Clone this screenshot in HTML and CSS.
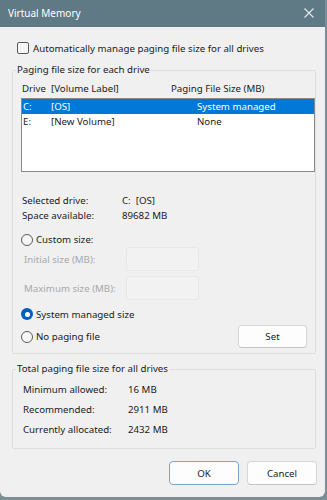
FILE: index.html
```html
<!DOCTYPE html>
<html>
<head>
<meta charset="utf-8">
<link rel="stylesheet" href="styles.css">
</head>
<body>
<div class="window">
  <div class="titlebar">
    <span class="title">Virtual Memory</span>
    <svg class="close" width="10" height="10" viewBox="0 0 10 10"><path d="M0.5 0.5 L9.5 9.5 M9.5 0.5 L0.5 9.5" stroke="#e4eaec" stroke-width="1.1" fill="none"/></svg>
  </div>
  <div class="content">
    <div class="auto-row">
      <span class="checkbox"></span>
      <span class="auto-label">Automatically manage paging file size for all drives</span>
    </div>

    <fieldset class="group group-drives">
      <legend>Paging file size for each drive</legend>
      <div class="list-header">
        <span class="h-drive">Drive</span>
        <span class="h-label">[Volume Label]</span>
        <span class="h-size">Paging File Size (MB)</span>
      </div>
      <div class="listbox">
        <div class="row selected">
          <span class="c-drive">C:</span>
          <span class="c-label">[OS]</span>
          <span class="c-size">System managed</span>
        </div>
        <div class="row">
          <span class="c-drive">E:</span>
          <span class="c-label">[New Volume]</span>
          <span class="c-size">None</span>
        </div>
      </div>

      <div class="info first">
        <span class="info-label">Selected drive:</span>
        <span class="info-value">C:&nbsp; [OS]</span>
      </div>
      <div class="info">
        <span class="info-label">Space available:</span>
        <span class="info-value">89682 MB</span>
      </div>

      <div class="radio-row custom">
        <span class="radio"></span>
        <span>Custom size:</span>
      </div>
      <div class="size-row first-size">
        <span class="size-label">Initial size (MB):</span>
        <span class="size-input"></span>
      </div>
      <div class="size-row second-size">
        <span class="size-label">Maximum size (MB):</span>
        <span class="size-input"></span>
      </div>

      <div class="radio-row system">
        <span class="radio checked"></span>
        <span>System managed size</span>
      </div>
      <div class="radio-row nopaging">
        <span class="radio"></span>
        <span class="grow">No paging file</span>
        <button class="btn btn-set">Set</button>
      </div>
    </fieldset>

    <fieldset class="group group-total">
      <legend>Total paging file size for all drives</legend>
      <div class="total-row">
        <span class="total-label">Minimum allowed:</span>
        <span>16 MB</span>
      </div>
      <div class="total-row">
        <span class="total-label">Recommended:</span>
        <span>2911 MB</span>
      </div>
      <div class="total-row">
        <span class="total-label">Currently allocated:</span>
        <span>2432 MB</span>
      </div>
    </fieldset>

    <div class="footer">
      <button class="btn btn-ok">OK</button>
      <button class="btn btn-cancel">Cancel</button>
    </div>
  </div>
</div>
</body>
</html>
```

FILE: styles.css
```css
html, body {
  margin: 0;
  padding: 0;
}
body {
  background: #7b8e96;
  width: 327px;
  height: 500px;
  overflow: hidden;
  font-family: "Noto Sans", "Open Sans", sans-serif;
  font-size: 9.7px;
  color: #1b1b1b;
}
.window {
  width: 325px;
  height: 497px;
  background: #f0f0f0;
  border-radius: 0 0 6px 6px;
  display: flex;
  flex-direction: column;
  overflow: hidden;
}
.titlebar {
  height: 27px;
  flex: none;
  background: #5f7985;
  color: #ffffff;
  display: flex;
  align-items: center;
  justify-content: space-between;
  padding: 0 11px 1px 8px;
  box-sizing: border-box;
  font-size: 10px;
}
.content {
  padding: 0 9px 0 12px;
  display: flex;
  flex-direction: column;
}
.auto-row {
  margin-top: 15px;
  height: 12px;
  padding-left: 5px;
  display: flex;
  align-items: center;
}
.checkbox {
  width: 10px;
  height: 10px;
  border: 1px solid #5a5a5a;
  border-radius: 2px;
  background: #f7f7f7;
  flex: none;
}
.auto-label {
  margin-left: 4px;
  line-height: 12px;
  padding-top: 1px;
}
.group {
  margin: 0;
  border: 1px solid #dedede;
  border-radius: 2px;
  padding: 4px 0 0 8px;
  min-width: 0;
}
.group legend {
  line-height: 14px;
  padding: 0 1px;
  margin-left: -5px;
}
.group-drives {
  margin-top: 9px;
  padding-bottom: 5px;
}
.list-header {
  height: 15px;
  line-height: 15px;
  display: flex;
  padding-left: 1px;
}
.h-drive { width: 29px; }
.h-label { width: 120px; }
.listbox {
  margin-top: 2px;
  height: 74px;
  box-sizing: border-box;
  border: 1px solid #8a8a8a;
  background: #ffffff;
}
.row {
  height: 15px;
  line-height: 15px;
  display: flex;
  padding-left: 1px;
}
.row.selected {
  background: #0078d7;
  color: #ffffff;
}
.c-drive { width: 28px; }
.c-label { width: 146px; }
.info {
  line-height: 15px;
  display: flex;
  padding-left: 1px;
}
.info.first { margin-top: 21px; }
.info-label { width: 100px; }
.radio-row {
  display: flex;
  align-items: center;
}
.radio {
  width: 10px;
  height: 10px;
  border: 1px solid #5a5a5a;
  border-radius: 50%;
  background: #f7f7f7;
  flex: none;
  margin-right: 3px;
}
.radio.checked {
  width: 12px;
  height: 12px;
  border: none;
  background: #005fb8;
  display: flex;
  align-items: center;
  justify-content: center;
}
.radio.checked::after {
  content: "";
  width: 5px;
  height: 5px;
  border-radius: 50%;
  background: #ffffff;
}
.custom {
  margin-top: 9px;
  height: 15px;
}
.size-row {
  height: 24px;
  display: flex;
  align-items: center;
  padding-left: 3px;
  color: #a8a8a8;
}
.second-size { margin-top: 5px; }
.size-label { width: 102px; }
.size-input {
  width: 73px;
  height: 24px;
  box-sizing: border-box;
  border: 1px solid #e8e8e8;
  border-radius: 3px;
  background: #f2f2f2;
}
.system {
  margin-top: 6px;
  height: 16px;
}
.nopaging {
  margin-top: 3px;
  height: 23px;
}
.grow { flex: 1; }
.btn {
  font-family: inherit;
  font-size: 9.7px;
  color: #1b1b1b;
  background: #fdfdfd;
  border: 1px solid #d6d6d6;
  border-bottom-color: #c4c4c4;
  border-radius: 4px;
  padding: 0;
  height: 24px;
  box-sizing: border-box;
}
.btn-set {
  width: 69px;
  height: 23px;
  margin-right: 8px;
}
.group-total {
  margin-top: 8px;
  padding-bottom: 8px;
}
.total-row {
  height: 20px;
  line-height: 20px;
  display: flex;
  padding-left: 2px;
}
.total-label { width: 105px; }
.footer {
  margin-top: 12px;
  margin-right: -1px;
  display: flex;
  justify-content: flex-end;
  gap: 8px;
}
.btn-ok,
.btn-cancel {
  width: 70px;
}
.btn-ok {
  border: 1px solid #7ea3c9;
}
```
